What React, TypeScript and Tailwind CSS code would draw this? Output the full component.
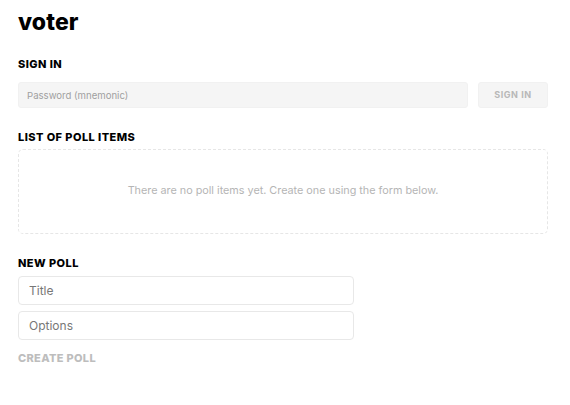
import React from "react";

export default function App() {
  return (
    <div className="min-h-[405px] w-[570px] bg-white px-[18px] pt-[7px] text-black" style={{ fontFamily: "Inter, 'Noto Sans', sans-serif" }}>
      <h1 className="text-[23px] font-extrabold leading-[30px] tracking-[0.005em]">voter</h1>

      <h2 className="mt-[20px] text-[11px] font-extrabold leading-[14px] tracking-[0.04em]">SIGN IN</h2>
      <div className="mt-[11px] flex w-[530px] gap-[10px]">
        <input
          className="h-[26px] flex-1 rounded-[3px] border border-[#f1f1f1] bg-[#f5f5f5] px-[8px] text-[9.6px] text-[#999] outline-none placeholder:text-[#a0a0a0]"
          placeholder="Password (mnemonic)"
        />
        <button className="h-[26px] w-[70px] rounded-[3px] border border-[#f1f1f1] bg-[#f5f5f5] text-[9px] font-bold tracking-[0.06em] text-[#b8b8b8]">
          SIGN IN
        </button>
      </div>

      <h2 className="mt-[22px] text-[11px] font-extrabold leading-[14px] tracking-[0.04em]">LIST OF POLL ITEMS</h2>
      <div className="mt-[5px] flex h-[85px] w-[530px] items-center justify-center rounded-[5px] border border-dashed border-[#e6e6e6] text-[10.8px] text-[#b5b5b5]">
        There are no poll items yet. Create one using the form below.
      </div>

      <h2 className="mt-[22px] text-[11px] font-extrabold leading-[14px] tracking-[0.04em]">NEW POLL</h2>
      <div className="mt-[6px] flex w-[336px] flex-col gap-[6px]">
        <input
          className="h-[29px] rounded-[4px] border border-[#e8e8e8] bg-white px-[10px] text-[12px] outline-none placeholder:text-[#777]"
          placeholder="Title"
        />
        <input
          className="h-[29px] rounded-[4px] border border-[#e8e8e8] bg-white px-[10px] text-[12px] outline-none placeholder:text-[#777]"
          placeholder="Options"
        />
      </div>
      <button className="mt-[11px] block text-[11px] font-extrabold leading-[14px] tracking-[0.03em] text-[#bdbdbd]">
        CREATE POLL
      </button>
    </div>
  );
}
